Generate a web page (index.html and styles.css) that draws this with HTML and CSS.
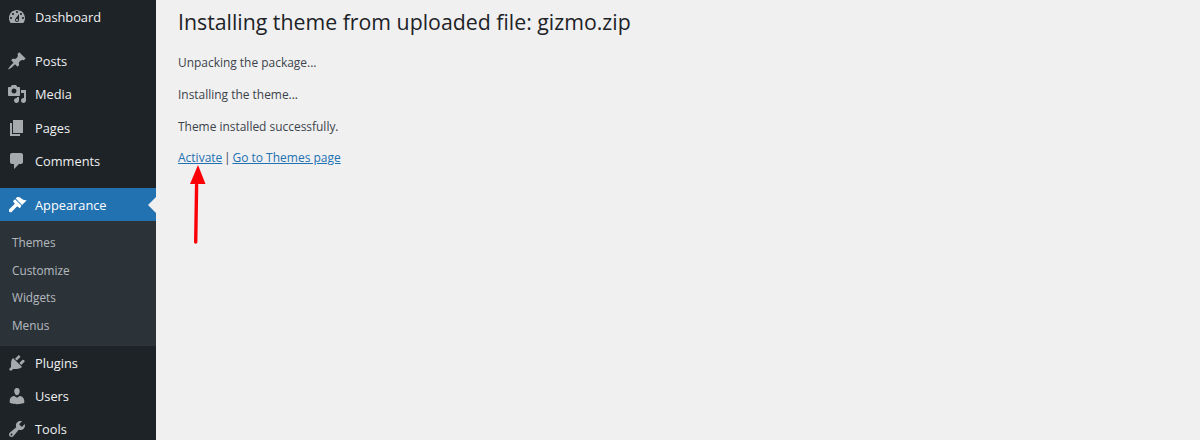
FILE: index.html
```html
<!DOCTYPE html>
<html lang="en">
<head>
<meta charset="utf-8">
<title>Installing theme</title>
<link rel="stylesheet" href="styles.css">
</head>
<body>
<div class="app">
  <nav class="sidebar">
    <a class="item first"><svg class="ico" viewBox="0 0 20 20"><path d="M3.76 16h12.48c1.1-1.37 1.76-3.11 1.76-5 0-4.42-3.58-8-8-8s-8 3.58-8 8c0 1.89.66 3.63 1.76 5zM10 4c.55 0 1 .45 1 1s-.45 1-1 1-1-.45-1-1 .45-1 1-1zM6 6c.55 0 1 .45 1 1s-.45 1-1 1-1-.45-1-1 .45-1 1-1zm8 0c.55 0 1 .45 1 1s-.45 1-1 1-1-.45-1-1 .45-1 1-1zm-5.37 5.55L12 7v6c0 1.1-.9 2-2 2s-2-.9-2-2c0-.57.24-1.08.63-1.45zM4 10c.55 0 1 .45 1 1s-.45 1-1 1-1-.45-1-1 .45-1 1-1zm12 0c.55 0 1 .45 1 1s-.45 1-1 1-1-.45-1-1 .45-1 1-1zm-5 3c0-.55-.45-1-1-1s-1 .45-1 1 .45 1 1 1 1-.45 1-1z" fill-rule="evenodd"/></svg><span>Dashboard</span></a>
    <div class="group">
      <a class="item"><svg class="ico" viewBox="0 0 20 20"><path d="M10.44 3.02l1.82-1.82 6.36 6.35-1.83 1.82c-1.05-.68-2.48-.57-3.41.36l-.75.75c-.92.93-1.04 2.35-.35 3.41l-1.83 1.82-2.41-2.41-2.8 2.79c-.42.42-3.38 2.71-3.8 2.29s1.86-3.39 2.28-3.81l2.79-2.79L4.1 9.36l1.83-1.82c1.05.69 2.48.57 3.4-.36l.75-.75c.93-.92 1.05-2.35.36-3.41z"/></svg><span>Posts</span></a>
      <a class="item"><svg class="ico" viewBox="0 0 20 20"><path fill-rule="evenodd" d="M13 11V4c0-.55-.45-1-1-1h-1.67L9 1H5L3.67 3H2c-.55 0-1 .45-1 1v7c0 .55.45 1 1 1h10c.55 0 1-.45 1-1zM7 4.5c1.38 0 2.5 1.12 2.5 2.5S8.38 9.5 7 9.5 4.5 8.38 4.5 7 5.62 4.5 7 4.5zM14 6h5v10.5c0 1.38-1.12 2.5-2.5 2.5S14 17.88 14 16.5s1.12-2.5 2.5-2.5c.17 0 .34.02.5.05V9h-3V6zm-4 8.05V13h2v3.5c0 1.38-1.12 2.5-2.5 2.5S7 17.88 7 16.5 8.12 14 9.5 14c.17 0 .34.02.5.05z"/></svg><span>Media</span></a>
      <a class="item"><svg class="ico" viewBox="0 0 20 20"><path d="M6 15V2h10v13H6zm-1 1h8v2H3V5h2v11z"/></svg><span>Pages</span></a>
      <a class="item"><svg class="ico" viewBox="0 0 20 20"><path d="M5 2h9c1.1 0 2 .9 2 2v7c0 1.1-.9 2-2 2h-2l-5 5v-5H5c-1.1 0-2-.9-2-2V4c0-1.1.9-2 2-2z"/></svg><span>Comments</span></a>
    </div>
    <a class="item active"><svg class="ico" viewBox="0 0 20 20"><path d="M14.48 11.06L7.41 3.99l1.5-1.5c.5-.56 2.3-.47 3.51.32 1.21.8 1.43 1.28 2.91 2.1 1.18.64 2.45 1.26 4.45.85zm-.71.71L6.7 4.7 4.93 6.47c-.39.39-.39 1.02 0 1.41l1.06 1.06c.39.39.39 1.03 0 1.42-.6.6-5.64 5.46-5.64 5.46-.78.78-.78 2.04 0 2.82.78.78 2.04.78 2.82 0 0 0 4.86-5.04 5.46-5.64.39-.39 1.03-.39 1.42 0l1.06 1.06c.39.39 1.02.39 1.41 0z"/></svg><span>Appearance</span></a>
    <div class="submenu">
      <a class="subitem">Themes</a>
      <a class="subitem">Customize</a>
      <a class="subitem">Widgets</a>
      <a class="subitem">Menus</a>
    </div>
    <a class="item tail"><svg class="ico" viewBox="0 0 20 20"><path d="M13.11 4.36L9.87 7.6 8 5.73l3.24-3.24c.35-.34 1.05-.2 1.56.32.52.51.66 1.21.31 1.55zm-8 1.77l.91-1.12 9.01 9.01-1.19.84c-.71.71-2.63 1.16-3.82 1.16H6.14L4.9 17.26c-.59.59-1.54.59-2.12 0-.59-.58-.59-1.53 0-2.12l1.24-1.24v-3.88c0-1.13.4-3.19 1.09-3.89zm7.26 3.97l3.24-3.24c.34-.35 1.04-.21 1.55.31.52.51.66 1.21.31 1.55l-3.24 3.25z"/></svg><span>Plugins</span></a>
    <a class="item tail"><svg class="ico" viewBox="0 0 20 20"><path d="M10 9.25c-2.27 0-2.73-3.44-2.73-3.44C7 4.02 7.82 2 9.97 2c2.16 0 2.98 2.02 2.71 3.81 0 0-.41 3.44-2.68 3.44zm0 2.57L12.72 10c2.39 0 4.52 2.33 4.52 4.53v2.49s-3.65 1.13-7.24 1.13c-3.65 0-7.24-1.13-7.24-1.13v-2.49c0-2.25 1.94-4.48 4.47-4.48z"/></svg><span>Users</span></a>
    <a class="item tail"><svg class="ico" viewBox="0 0 20 20"><path fill-rule="evenodd" d="M16.68 9.77c-1.34 1.34-3.3 1.67-4.95.99l-5.41 6.52c-.99.99-2.59.99-3.58 0s-.99-2.59 0-3.57l6.52-5.42c-.68-1.65-.35-3.61.99-4.95 1.28-1.28 3.12-1.62 4.72-1.06l-2.89 2.89 2.82 2.82 2.86-2.87c.53 1.58.18 3.39-1.08 4.65zM3.81 16.21c.4.39 1.04.39 1.43 0 .4-.4.4-1.04 0-1.43-.39-.4-1.03-.4-1.43 0-.39.39-.39 1.03 0 1.43z"/></svg><span>Tools</span></a>
  </nav>
  <main class="content">
    <h1 class="title">Installing theme from uploaded file: gizmo.zip</h1>
    <p class="msg">Unpacking the package...</p>
    <p class="msg">Installing the theme...</p>
    <p class="msg">Theme installed successfully.</p>
    <p class="actions"><a class="link">Activate</a><span>|</span><a class="link">Go to Themes page</a></p>
    <svg class="arrow" viewBox="0 0 30 90" width="30" height="90"><path class="arrow-shaft" d="M10.7 77 L11.6 20"/><path class="arrow-head" d="M13 0 L5 19 L20.5 19 Z"/></svg>
  </main>
</div>
</body>
</html>
```
FILE: styles.css
```css
* { box-sizing: border-box; }
html, body { margin: 0; height: 100%; overflow: hidden; }
body {
  background: #f0f0f1;
  color: #3c434a;
  font-family: "Open Sans", "Noto Sans", "Liberation Sans", sans-serif;
}
.app { display: flex; height: 440px; overflow: hidden; }
.sidebar {
  width: 156px;
  flex: none;
  height: 440px;
  background: #1d2327;
  overflow: hidden;
  position: relative;
}
.item {
  display: flex;
  align-items: center;
  height: 33.4px;
  padding-left: 7px;
  gap: 8px;
  color: #f0f0f1;
  font-size: 12.8px;
  position: relative;
}
.tail { height: 33px; }
.group { margin: 11px 0 10px; }
.ico { width: 20px; height: 20px; fill: #a7aaad; flex: none; }
.active { background: #2271b1; color: #fff; }
.active .ico { fill: #fff; transform: scale(.9); transform-origin: 100% 0; }
.active::after {
  content: "";
  position: absolute;
  right: 0;
  top: 50%;
  margin-top: -8px;
  border: 8px solid transparent;
  border-right-color: #f0f0f1;
}
.submenu {
  background: #2c3338;
  padding: 7.2px 0 0;
  height: 125px;
}
.subitem {
  display: flex;
  align-items: center;
  height: 27.5px;
  padding-left: 12px;
  font-size: 11.8px;
  color: rgba(240, 246, 252, .7);
}
.content { flex: 1; padding: 0 22px; position: relative; }
.title {
  margin: 7px 0 0;
  font-size: 21.3px;
  line-height: 30px;
  font-weight: 400;
  color: #1d2327;
}
.msg {
  margin: 16px 0 0;
  height: 19px;
  font-size: 11.95px;
  line-height: 19px;
}
.msg + .msg { margin-top: 13px; }
.actions {
  display: flex;
  gap: 1.75px;
  margin: 12px 0 0;
  font-size: 12px;
  line-height: 19px;
}
.link { color: #2271b1; text-decoration: underline; }
.arrow { position: absolute; left: 29px; top: 165px; }
.arrow-shaft { stroke: #fb0007; stroke-width: 3.4; stroke-linecap: round; fill: none; }
.arrow-head { fill: #fb0007; }
```
